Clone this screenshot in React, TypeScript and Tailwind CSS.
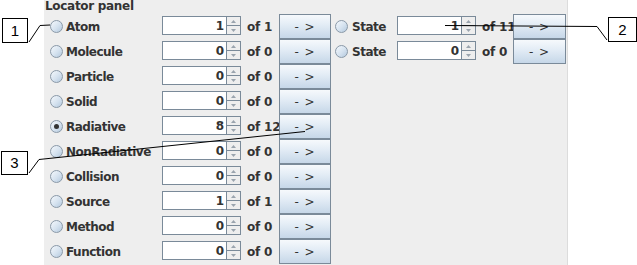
import React from "react";

const FONT = { fontFamily: '"DejaVu Sans", "Liberation Sans", sans-serif' };

function Radio({ checked }: { checked?: boolean }) {
  return (
    <div className="relative w-[13px] h-[13px] rounded-full border border-[#8a99a8] bg-[linear-gradient(135deg,#f4f8fc_0%,#d5e2ef_55%,#b3c8dd_100%)] shrink-0">
      {checked && (
        <div className="absolute left-[3px] top-[3px] w-[5px] h-[5px] rounded-full bg-[#333333]" />
      )}
    </div>
  );
}

function Spinner({ value }: { value: number }) {
  return (
    <div className="flex h-[19px] mt-[2px] shrink-0">
      <div className="w-[65px] h-[19px] bg-white border border-[#7a8a99] flex items-center justify-end pr-[2px] text-[12px] font-bold text-[#333333] leading-none">
        {value}
      </div>
      <div className="w-[14px] h-[19px] flex flex-col">
        <div className="h-[10px] border border-[#7a8a99] border-l-0 bg-[#eeeeee] flex items-center justify-center">
          <svg width="5" height="3" viewBox="0 0 5 3">
            <path d="M0 3 L2.5 0 L5 3Z" fill="#9aa4ae" />
          </svg>
        </div>
        <div className="h-[9px] border border-t-0 border-l-0 border-[#7a8a99] bg-[#eeeeee] flex items-center justify-center">
          <svg width="5" height="3" viewBox="0 0 5 3">
            <path d="M0 0 L2.5 3 L5 0Z" fill="#9aa4ae" />
          </svg>
        </div>
      </div>
    </div>
  );
}

function GoButton({ w }: { w: string }) {
  return (
    <div
      className={`${w} h-[25px] border border-[#7a8a99] bg-[linear-gradient(180deg,#f6f9fc_0%,#e4edf6_40%,#c6d7e8_100%)] flex items-center justify-center text-[12px] text-[#333333] shrink-0`}
    >
      <span className="tracking-[1px] pt-[1px]">- &gt;</span>
    </div>
  );
}

const leftRows: { label: string; value: number; of: number; checked?: boolean }[] = [
  { label: "Atom", value: 1, of: 1 },
  { label: "Molecule", value: 0, of: 0 },
  { label: "Particle", value: 0, of: 0 },
  { label: "Solid", value: 0, of: 0 },
  { label: "Radiative", value: 8, of: 12, checked: true },
  { label: "NonRadiative", value: 0, of: 0 },
  { label: "Collision", value: 0, of: 0 },
  { label: "Source", value: 1, of: 1 },
  { label: "Method", value: 0, of: 0 },
  { label: "Function", value: 0, of: 0 },
];

const rightRows = [
  { label: "State", value: 1, of: 11 },
  { label: "State", value: 0, of: 0 },
];

export default function App() {
  return (
    <div className="relative w-[637px] h-[265px] bg-white overflow-hidden" style={FONT}>
      <div className="ml-[44px] w-[524px] h-[265px] bg-[#eeeeee] border-r border-[#dcdcdc] text-[#333333]">
        <div className="h-[14px] pl-[1px] text-[12px] font-bold leading-[13px] tracking-[-0.3px]">
          Locator panel
        </div>
        <div className="flex">
          <div className="flex flex-col">
            {leftRows.map((r, i) => (
              <div key={i} className="flex h-[25px] items-start">
                <div className="ml-[6px] mt-[6px]">
                  <Radio checked={r.checked} />
                </div>
                <div className="ml-[3px] w-[96px] mt-[6px] text-[12px] font-bold leading-[14px] tracking-[-0.5px] whitespace-nowrap">
                  {r.label}
                </div>
                <Spinner value={r.value} />
                <div className="ml-[6px] w-[32px] mt-[6px] text-[12px] font-bold leading-[14px] whitespace-nowrap tracking-[-0.2px]">
                  of {r.of}
                </div>
                <GoButton w="w-[52px]" />
              </div>
            ))}
          </div>
          <div className="flex flex-col">
            {rightRows.map((r, i) => (
              <div key={i} className="flex h-[25px] items-start">
                <div className="ml-[4px] mt-[6px]">
                  <Radio />
                </div>
                <div className="ml-[4px] w-[45px] mt-[6px] text-[12px] font-bold leading-[14px] tracking-[-0.5px] whitespace-nowrap">
                  {r.label}
                </div>
                <Spinner value={r.value} />
                <div className="ml-[6px] w-[31px] mt-[6px] text-[12px] font-bold leading-[14px] whitespace-nowrap tracking-[-0.2px]">
                  of {r.of}
                </div>
                <GoButton w="w-[53px]" />
              </div>
            ))}
          </div>
        </div>
      </div>
      <svg className="absolute inset-0 pointer-events-none" width="637" height="265" viewBox="0 0 637 265">
        <g fill="white" stroke="black" strokeWidth="1">
          <rect x="2.5" y="18.5" width="25" height="24" />
          <rect x="608.5" y="17.5" width="28" height="24" />
          <rect x="1.5" y="151.5" width="26" height="23" />
        </g>
        <g fill="none" stroke="black" strokeWidth="1">
          <polyline points="29,42 40,25.5 50,25" />
          <polyline points="445,25.5 597,26.5 607,40" />
          <polyline points="29,173 39,159.5 305,131.5" />
        </g>
        <g fontFamily="Liberation Sans, Arial, sans-serif" fontSize="15" fill="black" textAnchor="middle">
          <text x="15" y="36">1</text>
          <text x="622.5" y="35">2</text>
          <text x="14.5" y="168">3</text>
        </g>
      </svg>
    </div>
  );
}
